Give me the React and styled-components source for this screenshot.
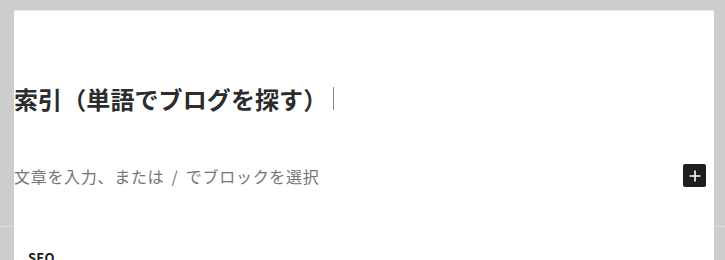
import React from "react";
import styled, { createGlobalStyle } from "styled-components";

const Global = createGlobalStyle`
  html, body {
    margin: 0;
    padding: 0;
    overflow: hidden;
    background: #cdcdcd;
  }
  body {
    font-family: "Noto Sans CJK JP", "Noto Sans", sans-serif;
  }
`;

const Canvas = styled.div`
  width: 725px;
  height: 260px;
  display: grid;
  grid-template-columns: 14px 700px 11px;
  grid-template-rows: 10px 250px;
  background: #cdcdcd;
  overflow: hidden;
`;

const Gutter = styled.div`
  grid-column: ${(p) => p.$col};
  grid-row: 1 / 3;
  background: linear-gradient(to bottom, #cdcdcd 0, #cdcdcd 226px, #dedede 226px, #dedede 227px, #cdcdcd 227px);
  background-color: #cdcdcd;
`;

const Panel = styled.div`
  grid-column: 2;
  grid-row: 2;
  background: #ffffff;
  border-top: 1px solid #e4e4e4;
  padding-top: 71px;
  box-sizing: border-box;
  overflow: hidden;
`;

const Title = styled.h1`
  margin: 0;
  font-size: 24px;
  line-height: 33.6px;
  font-weight: 700;
  letter-spacing: 0.1px;
  color: #2c2c2c;
  display: flex;
  align-items: center;
`;

const Caret = styled.span`
  display: inline-block;
  width: 1px;
  height: 23px;
  background: #8a8a8a;
  margin-left: 6px;
`;

const BlockRow = styled.div`
  margin-top: 48px;
  display: flex;
  align-items: center;
  justify-content: space-between;
  padding-right: 8px;
  height: 24px;
`;

const Placeholder = styled.span`
  font-size: 16px;
  line-height: 24px;
  letter-spacing: 0.7px;
  word-spacing: 3px;
  color: #757575;
`;

const AddButton = styled.button`
  width: 23px;
  height: 23px;
  border: none;
  border-radius: 2px;
  background: #1e1e1e;
  padding: 0;
  display: flex;
  align-items: center;
  justify-content: center;
  cursor: pointer;
`;

const MetaRow = styled.div`
  margin-top: 61px;
  display: flex;
  align-items: center;
  justify-content: space-between;
  padding: 0 17px 0 14px;
  height: 18px;
`;

const MetaLabel = styled.span`
  font-size: 13px;
  font-weight: 700;
  color: #1e1e1e;
  letter-spacing: 0.2px;
`;

const Chevron = styled.span`
  display: inline-block;
  width: 0;
  height: 0;
  border-left: 3.5px solid transparent;
  border-right: 3.5px solid transparent;
  border-top: 5px solid #555;
  margin-top: 12px;
`;

export default function App() {
  return (
    <>
      <Global />
      <Canvas>
        <Gutter $col={1} />
        <Panel>
          <Title>
            索引（単語でブログを探す）
            <Caret />
          </Title>
          <BlockRow>
            <Placeholder>文章を入力、または / でブロックを選択</Placeholder>
            <AddButton aria-label="ブロックを追加">
              <svg width="14" height="14" viewBox="0 0 14 14">
                <path d="M7 1.5v11M1.5 7h11" stroke="#fff" strokeWidth="1.6" />
              </svg>
            </AddButton>
          </BlockRow>
          <MetaRow>
            <MetaLabel>SEO</MetaLabel>
            <Chevron />
          </MetaRow>
        </Panel>
        <Gutter $col={3} />
      </Canvas>
    </>
  );
}
